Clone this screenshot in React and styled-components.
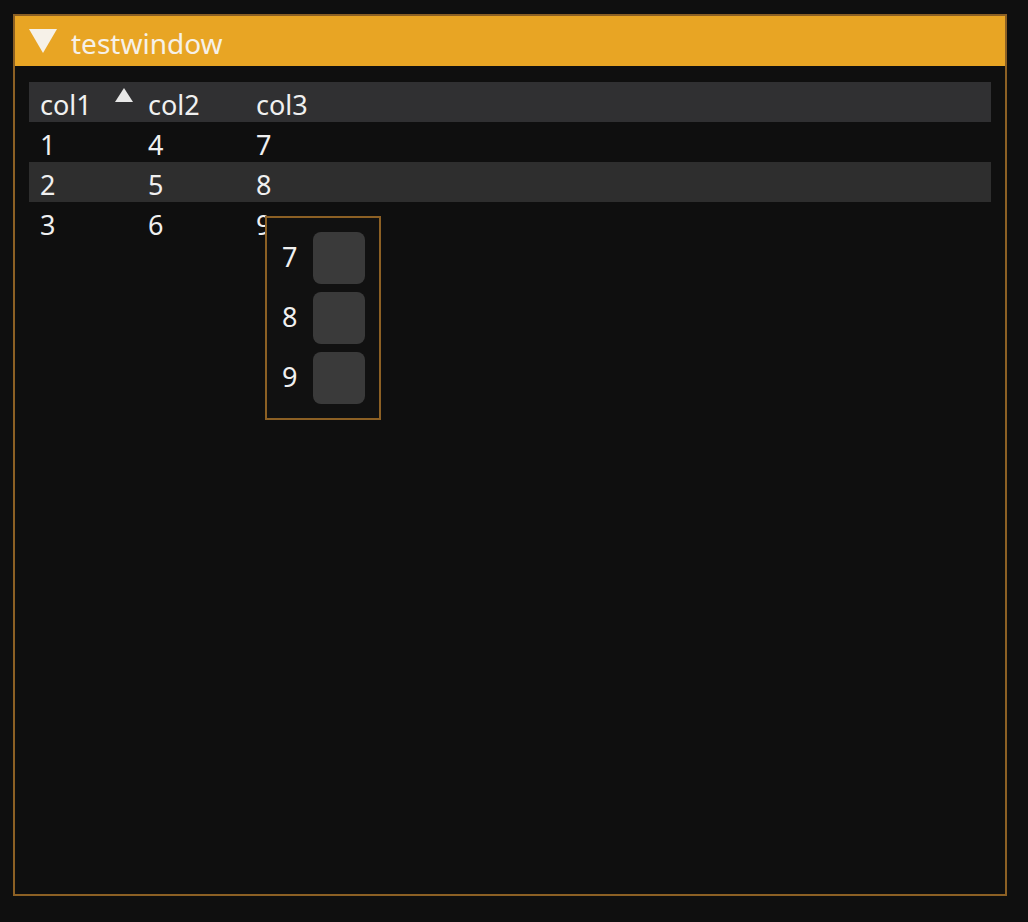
import styled, { createGlobalStyle } from "styled-components";

const GlobalStyle = createGlobalStyle`
  html, body {
    margin: 0;
    padding: 0;
    background: #0f0f0f;
  }
  body {
    font-family: "Noto Sans", "Open Sans", sans-serif;
    color: #f0f0f0;
  }
  #root {
    height: 922px;
  }
`;

const Page = styled.div`
  height: 922px;
  padding: 14px 0 0 13px;
  box-sizing: border-box;
`;

const Window = styled.section`
  position: relative;
  width: 994px;
  height: 882px;
  box-sizing: border-box;
  border: 2px solid #8c6024;
  background: #0f0f0f;
`;

const TitleBar = styled.header`
  height: 50px;
  box-sizing: border-box;
  background: #e8a524;
  display: flex;
  align-items: center;
  gap: 14px;
  padding: 0 0 0 14px;
  font-size: 28px;
  color: #f6f1e8;
`;

const TitleText = styled.span`
  padding-top: 4px;
`;

const Triangle = styled.span`
  width: 0;
  height: 0;
  border-left: ${({ $w }) => $w / 2}px solid transparent;
  border-right: ${({ $w }) => $w / 2}px solid transparent;
  ${({ $up, $h, $color }) =>
    $up
      ? `border-bottom: ${$h}px solid ${$color};`
      : `border-top: ${$h}px solid ${$color};`}
`;

const Content = styled.div`
  padding: 16px 14px 0 14px;
`;

const Table = styled.div`
  display: flex;
  flex-direction: column;
`;

const Row = styled.div`
  display: grid;
  grid-template-columns: 108px 108px 1fr;
  height: 40px;
  background: ${({ $bg }) => $bg || "transparent"};
`;

const Cell = styled.div`
  position: relative;
  padding: 3px 0 0 11px;
  font-size: 27px;
  line-height: 40px;
  height: 40px;
  box-sizing: border-box;
  color: #f0f0f0;
`;

const SortArrow = styled.span`
  position: absolute;
  right: 4px;
  top: 6px;
  display: flex;
`;

const Popup = styled.div`
  position: absolute;
  left: 250px;
  top: 200px;
  width: 116px;
  box-sizing: border-box;
  border: 2px solid #8c6024;
  background: #111111;
  padding: 14px 14px 14px 15px;
  display: flex;
  flex-direction: column;
  gap: 8px;
`;

const PopupItem = styled.div`
  display: flex;
  align-items: center;
  justify-content: space-between;
  height: 52px;
`;

const PopupLabel = styled.span`
  font-size: 27px;
  color: #f0f0f0;
  padding-bottom: 4px;
`;

const ColorBox = styled.div`
  width: 52px;
  height: 52px;
  border-radius: 8px;
  background: #3a3a3a;
`;

const rows = [
  ["1", "4", "7"],
  ["2", "5", "8"],
  ["3", "6", "9"],
];

export default function App() {
  return (
    <Page>
      <GlobalStyle />
      <Window>
        <TitleBar>
          <Triangle $w={28} $h={24} $color="#f6f1e8" />
          <TitleText>testwindow</TitleText>
        </TitleBar>
        <Content>
          <Table>
            <Row $bg="#303032">
              <Cell>
                col1
                <SortArrow>
                  <Triangle $up $w={18} $h={14} $color="#e8e8e8" />
                </SortArrow>
              </Cell>
              <Cell>col2</Cell>
              <Cell>col3</Cell>
            </Row>
            {rows.map((r, i) => (
              <Row key={i} $bg={i === 1 ? "#2e2e2e" : undefined}>
                {r.map((v) => (
                  <Cell key={v}>{v}</Cell>
                ))}
              </Row>
            ))}
          </Table>
        </Content>
        <Popup>
          {["7", "8", "9"].map((v) => (
            <PopupItem key={v}>
              <PopupLabel>{v}</PopupLabel>
              <ColorBox />
            </PopupItem>
          ))}
        </Popup>
      </Window>
    </Page>
  );
}
